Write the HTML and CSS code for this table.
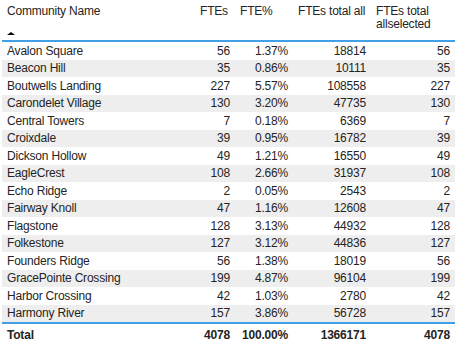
FILE: index.html
```html
<!DOCTYPE html>
<html>
<head>
<meta charset="utf-8">
<link rel="stylesheet" href="styles.css">
</head>
<body>
<div class="visual">
<table class="grid">
<colgroup>
<col class="c1"><col class="c2"><col class="c3"><col class="c4"><col class="c5">
</colgroup>
<thead>
<tr>
<th><div class="hd"><span>Community Name</span><span class="sort"></span></div></th>
<th><div class="hd"><span>FTEs</span></div></th>
<th><div class="hd"><span>FTE%</span></div></th>
<th><div class="hd"><span>FTEs total all</span></div></th>
<th><div class="hd"><span>FTEs total allselected</span></div></th>
</tr>
</thead>
<tbody>
<tr><td>Avalon Square</td><td>56</td><td>1.37%</td><td>18814</td><td>56</td></tr>
<tr><td>Beacon Hill</td><td>35</td><td>0.86%</td><td>10111</td><td>35</td></tr>
<tr><td>Boutwells Landing</td><td>227</td><td>5.57%</td><td>108558</td><td>227</td></tr>
<tr><td>Carondelet Village</td><td>130</td><td>3.20%</td><td>47735</td><td>130</td></tr>
<tr><td>Central Towers</td><td>7</td><td>0.18%</td><td>6369</td><td>7</td></tr>
<tr><td>Croixdale</td><td>39</td><td>0.95%</td><td>16782</td><td>39</td></tr>
<tr><td>Dickson Hollow</td><td>49</td><td>1.21%</td><td>16550</td><td>49</td></tr>
<tr><td>EagleCrest</td><td>108</td><td>2.66%</td><td>31937</td><td>108</td></tr>
<tr><td>Echo Ridge</td><td>2</td><td>0.05%</td><td>2543</td><td>2</td></tr>
<tr><td>Fairway Knoll</td><td>47</td><td>1.16%</td><td>12608</td><td>47</td></tr>
<tr><td>Flagstone</td><td>128</td><td>3.13%</td><td>44932</td><td>128</td></tr>
<tr><td>Folkestone</td><td>127</td><td>3.12%</td><td>44836</td><td>127</td></tr>
<tr><td>Founders Ridge</td><td>56</td><td>1.38%</td><td>18019</td><td>56</td></tr>
<tr><td>GracePointe Crossing</td><td>199</td><td>4.87%</td><td>96104</td><td>199</td></tr>
<tr><td>Harbor Crossing</td><td>42</td><td>1.03%</td><td>2780</td><td>42</td></tr>
<tr><td>Harmony River</td><td>157</td><td>3.86%</td><td>56728</td><td>157</td></tr>
</tbody>
<tfoot>
<tr><td>Total</td><td>4078</td><td>100.00%</td><td>1366171</td><td>4078</td></tr>
</tfoot>
</table>
</div>
</body>
</html>
```
FILE: styles.css
```css
html, body {
  margin: 0;
  padding: 0;
  background: #ffffff;
}
body {
  font-family: "Liberation Sans", Arial, sans-serif;
  font-size: 12px;
  letter-spacing: -0.2px;
  color: #252423;
  overflow: hidden;
}
.visual {
  padding-left: 2px;
}
.grid {
  border-collapse: collapse;
  table-layout: fixed;
  width: 453px;
}
.c1 { width: 193px; }
.c2 { width: 40px; }
.c3 { width: 58px; }
.c4 { width: 78px; }
.c5 { width: 84px; }
th {
  height: 40px;
  padding: 0 5px;
  vertical-align: top;
  text-align: left;
  font-weight: normal;
  border-bottom: 2px solid #41a0e6;
  color: #252423;
}
.hd {
  height: 40px;
  box-sizing: border-box;
  padding-top: 5px;
  line-height: 13px;
  display: flex;
  flex-direction: column;
  justify-content: flex-start;
}
.sort {
  margin-top: auto;
  margin-bottom: 5px;
  width: 0;
  height: 0;
  border-left: 4px solid transparent;
  border-right: 4px solid transparent;
  border-bottom: 3px solid #000;
}
td {
  height: 17.5px;
  padding: 0 5px;
  line-height: 14px;
  text-align: right;
  white-space: nowrap;
  vertical-align: middle;
}
td:first-child {
  text-align: left;
}
tbody tr:nth-child(even) td {
  background: #eeeeee;
}
tfoot td {
  font-weight: bold;
  height: 21px;
  border-top: 2px solid #41a0e6;
  padding-bottom: 1px;
}
```
